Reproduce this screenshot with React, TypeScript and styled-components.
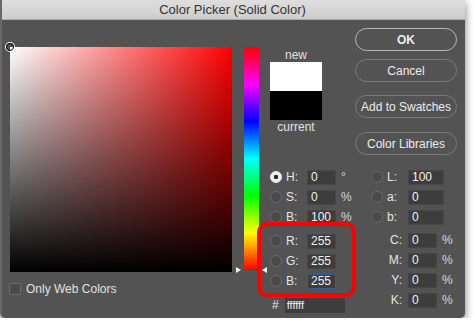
import { FC } from "react";
import styled, { createGlobalStyle } from "styled-components";

const GlobalStyle = createGlobalStyle`
	body {
		margin: 0;
		background: #ffffff;
		font-family: "Liberation Sans", Arial, sans-serif;
	}
`;

interface IField {
	label: string;
	value: string;
	unit?: string;
	radio?: boolean;
	checked?: boolean;
	focused?: boolean;
}

const hsb: IField[] = [
	{ label: "H:", value: "0", unit: "°", radio: true, checked: true },
	{ label: "S:", value: "0", unit: "%", radio: true },
	{ label: "B:", value: "100", unit: "%", radio: true },
];

const rgb: IField[] = [
	{ label: "R:", value: "255", radio: true },
	{ label: "G:", value: "255", radio: true },
	{ label: "B:", value: "255", radio: true, focused: true },
];

const lab: IField[] = [
	{ label: "L:", value: "100", radio: true },
	{ label: "a:", value: "0", radio: true },
	{ label: "b:", value: "0", radio: true },
];

const cmyk: IField[] = [
	{ label: "C:", value: "0", unit: "%" },
	{ label: "M:", value: "0", unit: "%" },
	{ label: "Y:", value: "0", unit: "%" },
	{ label: "K:", value: "0", unit: "%" },
];

const FieldRow: FC<{ f: IField; $wide?: boolean }> = ({ f, $wide }) => (
	<Row>
		{f.radio ? <Radio $checked={f.checked} /> : <span />}
		<Label $right={!f.radio}>{f.label}</Label>
		<Input $wide={$wide} $focused={f.focused}>
			{f.value}
		</Input>
		<Unit>{f.unit ?? ""}</Unit>
	</Row>
);

const App: FC = () => {
	return (
		<>
			<GlobalStyle />
			<Dialog>
				<TitleBar>Color Picker (Solid Color)</TitleBar>
				<Content>
					<LeftCol>
						<ColorField>
							<FieldMarker />
						</ColorField>
						<CheckRow>
							<CheckBox />
							<span>Only Web Colors</span>
						</CheckRow>
					</LeftCol>

					<HueSlider>
						<Arrow $side="left" />
						<Arrow $side="right" />
					</HueSlider>

					<RightArea>
						<TopRow>
							<Preview>
								<PreviewLabel>new</PreviewLabel>
								<Swatch $color="#ffffff" />
								<Swatch $color="#000000" />
								<PreviewLabel>current</PreviewLabel>
							</Preview>
							<Buttons>
								<Button $primary>OK</Button>
								<Button $gap={8}>Cancel</Button>
								<Button $gap={13}>Add to Swatches</Button>
								<Button $gap={14}>Color Libraries</Button>
							</Buttons>
						</TopRow>

						<Fields>
							<FieldCol>
								{hsb.map((f) => (
									<FieldRow key={f.label + "hsb"} f={f} />
								))}
								<Spacer />
								{rgb.map((f) => (
									<FieldRow key={f.label + "rgb"} f={f} />
								))}
								<Spacer />
								<HexRow>
									<span>#</span>
									<HexInput>ffffff</HexInput>
								</HexRow>
							</FieldCol>
							<FieldCol $right>
								{lab.map((f) => (
									<FieldRow key={f.label + "lab"} f={f} $wide />
								))}
								<Spacer $h={3} />
								{cmyk.map((f) => (
									<FieldRow key={f.label + "cmyk"} f={f} />
								))}
							</FieldCol>
						</Fields>

						<Highlight />
					</RightArea>
				</Content>
			</Dialog>
		</>
	);
};

export default App;

const Dialog = styled.div`
	width: 465px;
	height: 318px;
	background: #535353;
	border-left: 2px solid #686868;
	box-sizing: border-box;
	border-radius: 0 0 5px 5px;
	box-shadow: 0 3px 8px rgba(0, 0, 0, 0.55);
	color: #e4e4e4;
	font-size: 12px;
	overflow: hidden;
`;

const TitleBar = styled.div`
	height: 20px;
	line-height: 20px;
	background: linear-gradient(#dedede, #cdcdcd);
	border-bottom: 1px solid #aaaaaa;
	box-sizing: border-box;
	text-align: center;
	color: #333333;
	font-size: 13px;
	padding-right: 2px;
`;

const Content = styled.div`
	display: flex;
	padding-left: 8px;
	height: 298px;
`;

const LeftCol = styled.div`
	width: 222px;
	padding-top: 27px;
`;

const ColorField = styled.div`
	position: relative;
	width: 222px;
	height: 225px;
	background: linear-gradient(to bottom, rgba(0, 0, 0, 0), #000000),
		linear-gradient(to right, #ffffff, #ff0000);
`;

const FieldMarker = styled.div`
	position: absolute;
	left: -4px;
	top: -4px;
	width: 6px;
	height: 6px;
	border-radius: 50%;
	border: 1px solid #000000;
	box-shadow: 0 0 0 1px #ffffff;
`;

const CheckRow = styled.div`
	display: flex;
	align-items: center;
	gap: 5px;
	margin-top: 10px;
	margin-left: -1px;
	color: #e0e0e0;
	font-size: 12px;
`;

const CheckBox = styled.div`
	width: 10px;
	height: 10px;
	border-radius: 2px;
	background: #4a4a4a;
	border: 1px solid #6c6c6c;
`;

const HueSlider = styled.div`
	position: relative;
	width: 16px;
	height: 223px;
	margin: 27px 0 0 12px;
	background: linear-gradient(
		to bottom,
		#ff0000 0%,
		#ff00ff 16.7%,
		#0000ff 33.3%,
		#00ffff 50%,
		#00ff00 66.7%,
		#ffff00 83.3%,
		#ff0000 100%
	);
`;

const Arrow = styled.div<{ $side: "left" | "right" }>`
	position: absolute;
	bottom: -3px;
	${({ $side }) => ($side === "left" ? "left: -8px;" : "right: -8px;")}
	width: 0;
	height: 0;
	border-top: 3.5px solid transparent;
	border-bottom: 3.5px solid transparent;
	${({ $side }) =>
		$side === "left" ? "border-left: 5px solid #f2f2f2;" : "border-right: 5px solid #f2f2f2;"}
`;

const RightArea = styled.div`
	position: relative;
	flex: 1;
`;

const TopRow = styled.div`
	display: flex;
	height: 147px;
`;

const Preview = styled.div`
	display: flex;
	flex-direction: column;
	align-items: center;
	width: 52px;
	margin: 28px 0 0 11px;
`;

const PreviewLabel = styled.div`
	height: 14px;
	line-height: 14px;
	font-size: 12px;
	color: #e0e0e0;
`;

const Swatch = styled.div<{ $color: string }>`
	width: 52px;
	height: 29px;
	background: ${({ $color }) => $color};
`;

const Buttons = styled.div`
	display: flex;
	flex-direction: column;
	width: 102px;
	margin: 8px 0 0 33px;
`;

const Button = styled.div<{ $primary?: boolean; $gap?: number }>`
	height: 23px;
	box-sizing: border-box;
	margin-top: ${({ $gap }) => $gap ?? 0}px;
	border-radius: 12px;
	border: 1px solid ${({ $primary }) => ($primary ? "#b8b8b8" : "#7a7a7a")};
	display: flex;
	align-items: center;
	justify-content: center;
	font-size: 12px;
	color: #ececec;
	font-weight: ${({ $primary }) => ($primary ? 600 : 400)};
`;

const Fields = styled.div`
	display: flex;
	gap: 13px;
	padding-left: 11px;
`;

const FieldCol = styled.div<{ $right?: boolean }>`
	display: flex;
	flex-direction: column;
	width: ${({ $right }) => ($right ? "94px" : "88px")};
`;

const Row = styled.div`
	display: grid;
	grid-template-columns: 12px 25px auto auto;
	justify-content: start;
	align-items: center;
	height: 20px;
`;

const Radio = styled.div<{ $checked?: boolean }>`
	width: 12px;
	height: 12px;
	box-sizing: border-box;
	border-radius: 50%;
	background: ${({ $checked }) =>
		$checked ? "radial-gradient(circle, #2a2a2a 0 2px, #ececec 2.5px)" : "#4a4a4a"};
	border: 1px solid ${({ $checked }) => ($checked ? "#ececec" : "#6a6a6a")};
`;

const Label = styled.span<{ $right?: boolean }>`
	padding-left: ${({ $right }) => ($right ? "0" : "4px")};
	padding-right: ${({ $right }) => ($right ? "6px" : "0")};
	text-align: ${({ $right }) => ($right ? "right" : "left")};
	font-size: 12px;
`;

const Input = styled.div<{ $wide?: boolean; $focused?: boolean }>`
	width: ${({ $wide }) => ($wide ? "36px" : "29px")};
	height: 15px;
	box-sizing: border-box;
	line-height: 13px;
	padding-left: 3px;
	background: #3d3d3d;
	border: 1px solid ${({ $focused }) => ($focused ? "#2f5f9a" : "#474747")};
	color: #f0f0f0;
	font-size: 12px;
`;

const Unit = styled.span`
	padding-left: 5px;
	font-size: 12px;
	color: #d8d8d8;
`;

const Spacer = styled.div<{ $h?: number }>`
	height: ${({ $h }) => $h ?? 4}px;
`;

const HexRow = styled.div`
	display: flex;
	align-items: center;
	gap: 6px;
	height: 20px;
	padding-left: 2px;
	font-size: 12px;
`;

const HexInput = styled.div`
	width: 58px;
	height: 15px;
	line-height: 15px;
	padding-left: 2px;
	background: #3d3d3d;
	color: #f0f0f0;
	font-size: 11px;
`;

const Highlight = styled.div`
	position: absolute;
	left: -2px;
	top: 202px;
	width: 99px;
	height: 75px;
	box-sizing: border-box;
	border: 4px solid #ff0000;
	border-radius: 10px;
	pointer-events: none;
`;
